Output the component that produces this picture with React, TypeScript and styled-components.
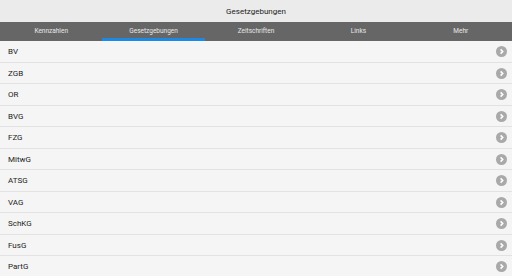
import React from 'react';
import styled, { createGlobalStyle } from 'styled-components';

const tabs = ['Kennzahlen', 'Gesetzgebungen', 'Zeitschriften', 'Links', 'Mehr'];
const laws = ['BV', 'ZGB', 'OR', 'BVG', 'FZG', 'MitwG', 'ATSG', 'VAG', 'SchKG', 'FusG', 'PartG'];

const GlobalStyle = createGlobalStyle`
  html, body {
    margin: 0;
    padding: 0;
    background: #f5f5f5;
    overflow: hidden;
  }
  body {
    font-family: Roboto, 'Liberation Sans', sans-serif;
  }
`;

const Chevron: React.FC = () => (
  <svg width='11' height='11' viewBox='0 0 11 11'>
    <circle cx='5.5' cy='5.5' r='5.5' fill='#a9a9a9' />
    <path d='M4.6 3.4 L6.7 5.5 L4.6 7.6' fill='none' stroke='#fff' strokeWidth='1.6' />
  </svg>
);

const App: React.FC = () => (
  <Page>
    <GlobalStyle />
    <TitleBar>Gesetzgebungen</TitleBar>
    <TabBar>
      {tabs.map((t) => (
        <Tab key={t} active={t === 'Gesetzgebungen'}>
          {t}
        </Tab>
      ))}
    </TabBar>
    <List>
      {laws.map((l) => (
        <Row key={l}>
          <Label>{l}</Label>
          <Chevron />
        </Row>
      ))}
    </List>
  </Page>
);

export default App;

const Page = styled.div`
  width: 512px;
  height: 276px;
  display: flex;
  flex-direction: column;
  background: #f5f5f5;
  overflow: hidden;
`;

const TitleBar = styled.header`
  flex-shrink: 0;
  height: 22px;
  display: flex;
  align-items: center;
  justify-content: center;
  background: #ebebeb;
  color: #1c1c1c;
  font-size: 8px;
  box-sizing: border-box;
  padding-top: 1px;
`;

const TabBar = styled.nav`
  flex-shrink: 0;
  height: 19px;
  display: grid;
  grid-template-columns: repeat(5, 1fr);
  background: #666666;
`;

const Tab = styled.div<{ active?: boolean }>`
  display: flex;
  align-items: center;
  justify-content: center;
  color: #e8e8e8;
  font-size: 6.5px;
  padding-top: 1px;
  box-sizing: border-box;
  border-bottom: 3px solid ${(p) => (p.active ? '#1e88e5' : 'transparent')};
`;

const List = styled.ul`
  flex-shrink: 0;
  list-style: none;
  margin: 0;
  padding: 0;
`;

const Row = styled.li`
  height: 21.5px;
  box-sizing: border-box;
  display: flex;
  align-items: center;
  justify-content: space-between;
  padding: 1px 5px 0 8px;
  border-bottom: 1px solid #e2e2e2;
`;

const Label = styled.span`
  color: #1c1c1c;
  font-size: 8px;
`;
